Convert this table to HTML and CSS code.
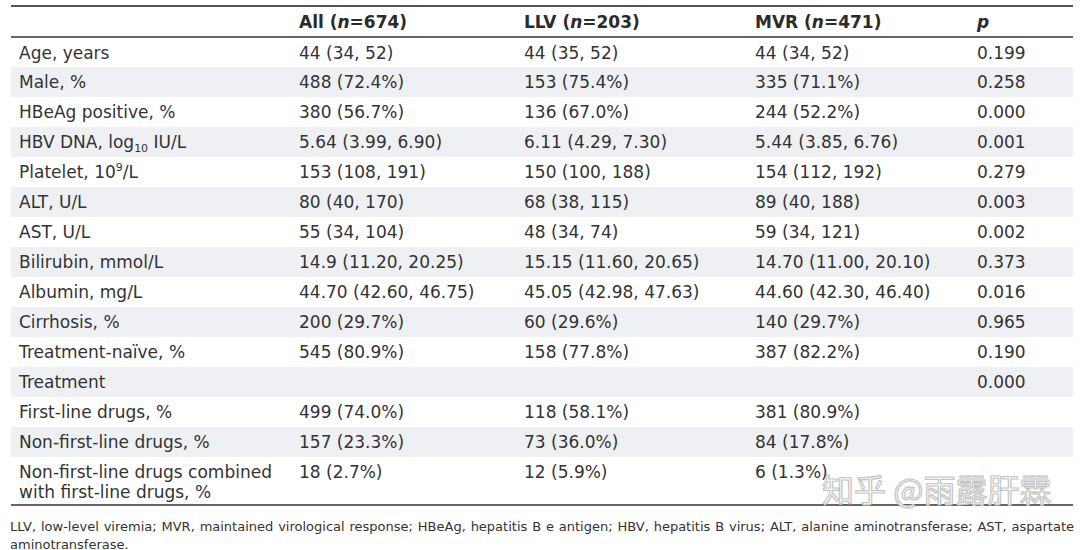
FILE: index.html
```html
<!DOCTYPE html>
<html>
<head>
<meta charset="utf-8">
<link rel="stylesheet" href="styles.css">
</head>
<body>
<div class="page">
  <table class="data">
    <colgroup>
      <col class="c-label"><col class="c-all"><col class="c-llv"><col class="c-mvr"><col class="c-p">
    </colgroup>
    <thead>
      <tr><th></th><th>All (<i>n</i>=674)</th><th>LLV (<i>n</i>=203)</th><th>MVR (<i>n</i>=471)</th><th><i>p</i></th></tr>
    </thead>
    <tbody>
      <tr><td>Age, years</td><td>44 (34, 52)</td><td>44 (35, 52)</td><td>44 (34, 52)</td><td>0.199</td></tr>
      <tr><td>Male, %</td><td>488 (72.4%)</td><td>153 (75.4%)</td><td>335 (71.1%)</td><td>0.258</td></tr>
      <tr><td>HBeAg positive, %</td><td>380 (56.7%)</td><td>136 (67.0%)</td><td>244 (52.2%)</td><td>0.000</td></tr>
      <tr><td>HBV DNA, log<sub>10</sub> IU/L</td><td>5.64 (3.99, 6.90)</td><td>6.11 (4.29, 7.30)</td><td>5.44 (3.85, 6.76)</td><td>0.001</td></tr>
      <tr><td>Platelet, 10<sup>9</sup>/L</td><td>153 (108, 191)</td><td>150 (100, 188)</td><td>154 (112, 192)</td><td>0.279</td></tr>
      <tr><td>ALT, U/L</td><td>80 (40, 170)</td><td>68 (38, 115)</td><td>89 (40, 188)</td><td>0.003</td></tr>
      <tr><td>AST, U/L</td><td>55 (34, 104)</td><td>48 (34, 74)</td><td>59 (34, 121)</td><td>0.002</td></tr>
      <tr><td>Bilirubin, mmol/L</td><td>14.9 (11.20, 20.25)</td><td>15.15 (11.60, 20.65)</td><td>14.70 (11.00, 20.10)</td><td>0.373</td></tr>
      <tr><td>Albumin, mg/L</td><td>44.70 (42.60, 46.75)</td><td>45.05 (42.98, 47.63)</td><td>44.60 (42.30, 46.40)</td><td>0.016</td></tr>
      <tr><td>Cirrhosis, %</td><td>200 (29.7%)</td><td>60 (29.6%)</td><td>140 (29.7%)</td><td>0.965</td></tr>
      <tr><td>Treatment-naïve, %</td><td>545 (80.9%)</td><td>158 (77.8%)</td><td>387 (82.2%)</td><td>0.190</td></tr>
      <tr><td>Treatment</td><td></td><td></td><td></td><td>0.000</td></tr>
      <tr><td>First-line drugs, %</td><td>499 (74.0%)</td><td>118 (58.1%)</td><td>381 (80.9%)</td><td></td></tr>
      <tr><td>Non-first-line drugs, %</td><td>157 (23.3%)</td><td>73 (36.0%)</td><td>84 (17.8%)</td><td></td></tr>
      <tr class="tall"><td>Non-first-line drugs combined<br>with first-line drugs, %</td><td>18 (2.7%)</td><td>12 (5.9%)</td><td>6 (1.3%)</td><td></td></tr>
    </tbody>
  </table>
  <p class="note">LLV, low-level viremia; MVR, maintained virological response; HBeAg, hepatitis B e antigen; HBV, hepatitis B virus; ALT, alanine aminotransferase; AST, aspartate aminotransferase.</p>
  <div class="watermark">知乎 @雨露肝霖</div>
</div>
</body>
</html>
```
FILE: styles.css
```css
html, body {
  margin: 0;
  padding: 0;
  background: #fff;
}
.page {
  position: relative;
  width: 1080px;
  height: 550px;
  padding: 5px 7px 0 11px;
  box-sizing: border-box;
  font-family: "DejaVu Sans", Verdana, sans-serif;
  color: #333;
}
.data {
  width: 1062px;
  border-collapse: collapse;
  table-layout: fixed;
  font-size: 17px;
}
.c-label { width: 280px; }
.c-all { width: 225px; }
.c-llv { width: 231px; }
.c-mvr { width: 222px; }
.c-p { width: 104px; }
.data thead th {
  text-align: left;
  font-weight: bold;
  height: 29px;
  padding: 0 8px;
  border-top: 2px solid #555;
  border-bottom: 2px solid #666;
  color: #2b2b2b;
}
.data td {
  height: 30px;
  padding: 0 8px;
  vertical-align: middle;
  white-space: nowrap;
  box-sizing: border-box;
}
.data tbody tr:nth-child(even) td {
  background: #eef0f3;
}
.data tbody tr.tall td {
  height: 48px;
  vertical-align: top;
  line-height: 20px;
  padding-top: 5px;
  border-bottom: 2px solid #666;
}
sub, sup {
  font-size: 11px;
  line-height: 0;
}
.note {
  margin: 12px 0 0 -1px;
  width: 1064px;
  font-size: 13px;
  line-height: 18px;
  text-align: justify;
  text-align-last: left;
  color: #333;
}
.watermark {
  position: absolute;
  left: 822px;
  top: 472px;
  white-space: nowrap;
  font-family: "Noto Sans CJK SC", sans-serif;
  font-size: 32px;
  letter-spacing: 0;
  color: #fff;
  -webkit-text-stroke: 1.2px #c4c4c4;
  line-height: 1;
}
```
